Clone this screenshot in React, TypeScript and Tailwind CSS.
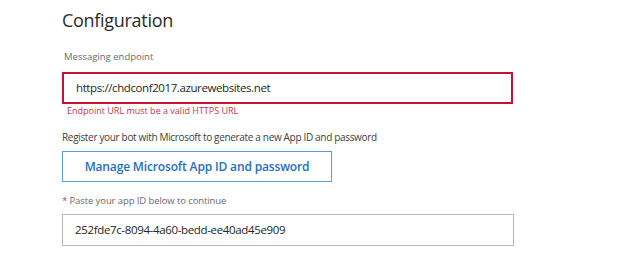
export default function App() {
  return (
    <div
      className="w-[624px] h-[272px] bg-white pl-[62px] pt-[6px] flex flex-col"
      style={{ fontFamily: '"Open Sans", "Noto Sans", sans-serif' }}
    >
      {/* Header */}
      <h1 className="text-[18px] leading-[29px] tracking-[-0.3px] text-[#2b2b2b]">Configuration</h1>

      {/* Messaging endpoint */}
      <label className="mt-[15px] text-[9.5px] leading-[14px] text-[#6b6b6b] pl-[2px]">
        Messaging endpoint
      </label>
      <div className="mt-[8px] w-[451px] h-[32px] border-2 border-[#c4122f] flex items-center px-[12px]">
        <span className="text-[11.5px] tracking-[-0.4px] text-[#1f1f1f]">
          https://chdconf2017.azurewebsites.net
        </span>
      </div>
      <p className="pl-[5px] text-[9px] leading-[14px] text-[#c8324f]">
        Endpoint URL must be a valid HTTPS URL
      </p>

      {/* App registration */}
      <p className="mt-[11px] text-[10px] leading-[16px] tracking-[-0.33px] text-[#404040]">
        Register your bot with Microsoft to generate a new App ID and password
      </p>
      <button className="mt-[6px] w-[270px] h-[31px] border border-[#5a9ee0] text-[12px] tracking-[-0.15px] font-semibold text-[#1e6fc0] flex items-center justify-center">
        Manage Microsoft App ID and password
      </button>

      <p className="mt-[12px] text-[9.5px] leading-[14px] tracking-[-0.1px] text-[#6b6b6b]">
        * Paste your app ID below to continue
      </p>
      <div className="mt-[6px] w-[452px] h-[32px] border border-[#b8b8b8] flex items-center px-[12px]">
        <span className="text-[11.5px] tracking-[-0.35px] text-[#262626]">
          252fde7c-8094-4a60-bedd-ee40ad45e909
        </span>
      </div>
    </div>
  );
}
